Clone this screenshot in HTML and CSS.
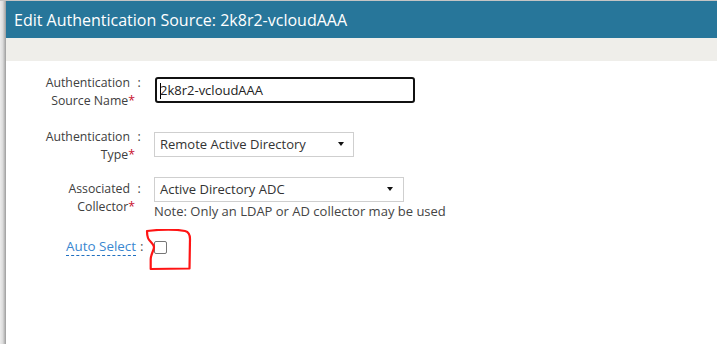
FILE: index.html
```html
<!DOCTYPE html>
<html lang="en">
<head>
<meta charset="utf-8">
<title>Edit Authentication Source</title>
<link rel="stylesheet" href="styles.css">
</head>
<body>
<div class="window">
  <div class="edge"></div>
  <div class="main">
    <div class="title">Edit Authentication Source: 2k8r2-vcloudAAA</div>
    <div class="band"></div>
    <form class="form">
      <div class="row r1">
        <div class="lab">
          <div class="txt"><span class="l1">Authentication</span><span class="l2">Source Name<span class="req">*</span></span></div>
          <span class="colon">:</span>
        </div>
        <div class="field">
          <div class="textbox"><span class="caret"></span>2k8r2-vcloudAAA</div>
        </div>
      </div>
      <div class="row r2">
        <div class="lab">
          <div class="txt"><span class="l1">Authentication</span><span class="l2">Type<span class="req">*</span></span></div>
          <span class="colon">:</span>
        </div>
        <div class="field">
          <div class="select s1"><span class="val">Remote Active Directory</span><span class="arrow"></span></div>
        </div>
      </div>
      <div class="row r3">
        <div class="lab">
          <div class="txt"><span class="l1">Associated</span><span class="l2">Collector<span class="req">*</span></span></div>
          <span class="colon">:</span>
        </div>
        <div class="field">
          <div class="select s2"><span class="val">Active Directory ADC</span><span class="arrow"></span></div>
          <div class="note">Note: Only an LDAP or AD collector may be used</div>
        </div>
      </div>
      <div class="row r4">
        <div class="lab">
          <div class="txt"><span class="link">Auto Select</span></div>
          <span class="colon">:</span>
        </div>
        <div class="field">
          <div class="checkbox"></div>
        </div>
        <svg class="mark" width="48" height="43" viewBox="0 0 48 43" aria-hidden="true">
          <path d="M2 2 C15 0.5, 32 0.5, 40 2 C44 3, 45 6, 45 10 L44.5 39.5 L5.7 40 L5.7 30 C6 25, 9 21, 9 18 C9 15, 4 12, 3 9 C2 6, 2 4, 2 2 Z" fill="none" stroke="#ff1414" stroke-width="2.2" stroke-linejoin="round"/>
        </svg>
      </div>
    </form>
  </div>
</div>
</body>
</html>
```

FILE: styles.css
```css
* { box-sizing: border-box; }

html, body {
  margin: 0;
  padding: 0;
  background: #ffffff;
}

body {
  font-family: "Open Sans", "Noto Sans", sans-serif;
  color: #444444;
}

.window {
  display: flex;
  min-height: 100vh;
  border-top: 1px solid #c4c4c4;
}

.edge {
  width: 6px;
  flex: none;
  background: linear-gradient(to right, #ececec 0%, #dcdcdc 45%, #b4b4b4 80%, #9c9c9c 100%);
}

.main {
  flex: 1;
  display: flex;
  flex-direction: column;
}

.title {
  height: 37px;
  background: #27769a;
  color: #ffffff;
  font-size: 16px;
  line-height: 20px;
  padding: 9px 0 0 8px;
  white-space: nowrap;
}

.band {
  height: 23px;
  background: #efeeea;
}

.form {
  margin: 0;
  padding-top: 13px;
}

.row {
  display: flex;
  align-items: flex-start;
}

.r2 { margin-top: 18px; }
.r3 { margin-top: 13px; }
.r4 { margin-top: 17px; position: relative; }

.lab {
  display: flex;
  align-items: flex-start;
  font-size: 12.3px;
  line-height: 18px;
  color: #404040;
}

.r3 .lab { margin-top: 3px; }

.txt {
  width: 129px;
  text-align: right;
}

.l1, .l2 { display: block; }
.l1 { margin-right: 5px; }

.req { color: #c8102e; }

.colon {
  width: 19px;
  padding-left: 2.5px;
}

.r4 .lab { font-size: 13.4px; }
.r4 .txt { width: 130px; }
.r4 .colon { width: 18px; padding-left: 4px; color: #555555; }

.link {
  display: inline-block;
  color: #3a87d0;
  border-bottom: 1px dashed #1f6fc0;
  line-height: 18px;
}

.field {
  display: flex;
  flex-direction: column;
  font-size: 13px;
}

.textbox {
  margin-top: 3px;
  margin-left: 1px;
  width: 260px;
  height: 26px;
  border: 2px solid #111111;
  border-radius: 3px;
  padding: 1px 0 0 3px;
  line-height: 21px;
  color: #222222;
  white-space: nowrap;
}

.caret {
  display: inline-block;
  width: 1px;
  height: 16px;
  background: #000000;
  vertical-align: -4px;
  margin-right: -1px;
}

.select {
  display: flex;
  align-items: center;
  justify-content: space-between;
  height: 25px;
  border: 1px solid #cfcfcf;
  background: #ffffff;
  padding: 0 9px 0 5px;
  color: #333333;
  line-height: 23px;
  white-space: nowrap;
}

.s1 { width: 200px; margin-top: 4px; }
.s2 { width: 250px; padding-right: 10px; }

.arrow {
  width: 0;
  height: 0;
  border-left: 3.5px solid transparent;
  border-right: 3.5px solid transparent;
  border-top: 4px solid #111111;
  margin-top: -1px;
}

.note {
  line-height: 18px;
  color: #444444;
  white-space: nowrap;
}

.checkbox {
  margin-top: 4px;
  width: 13px;
  height: 13px;
  border: 1px solid #767676;
  border-radius: 2px;
  background: #ffffff;
}

.mark {
  position: absolute;
  left: 139px;
  top: -8px;
}
```
